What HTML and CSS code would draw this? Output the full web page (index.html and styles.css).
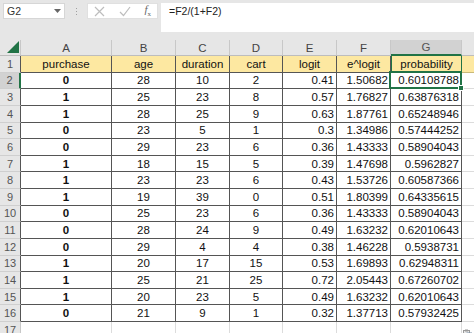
FILE: index.html
```html
<!DOCTYPE html>
<html lang="en">
<head>
    <meta charset="UTF-8">
    <title>Logistic regression - Excel</title>
    <link rel="stylesheet" href="styles.css">
</head>
<body>
    <div class="app">
        <!-- formula bar -->
        <div class="formula-bar">
            <div class="name-box">
                <span>G2</span>
                <svg class="drop" width="7" height="4" viewBox="0 0 7 4"><path d="M0 0h7L3.5 4z" fill="#666"/></svg>
            </div>
            <div class="grip"><i></i><i></i><i></i></div>
            <div class="fx-buttons">
                <svg width="11" height="11" viewBox="0 0 11 11"><path d="M1 1l9 9M10 1l-9 9" stroke="#bdbdbd" stroke-width="1.2"/></svg>
                <svg width="12" height="11" viewBox="0 0 12 11"><path d="M1 6l3.5 3.5L11 1" stroke="#bdbdbd" stroke-width="1.2" fill="none"/></svg>
                <span class="fx"><i>f</i><sub>x</sub></span>
            </div>
            <div class="formula">=F2/(1+F2)</div>
        </div>

        <!-- sheet -->
        <div class="sheet">
            <div class="corner"><span class="select-all"></span></div>
            <div class="col-head">A</div>
            <div class="col-head">B</div>
            <div class="col-head">C</div>
            <div class="col-head">D</div>
            <div class="col-head">E</div>
            <div class="col-head">F</div>
            <div class="col-head active">G</div>
            <div class="col-head last"></div>

            <div class="row-head">1</div>
            <div class="cell head">purchase</div>
            <div class="cell head">age</div>
            <div class="cell head">duration</div>
            <div class="cell head">cart</div>
            <div class="cell head">logit</div>
            <div class="cell head">e^logit</div>
            <div class="cell head g1">probability</div>
            <div class="cell head spare"></div>

            <div class="row-head active">2</div>
            <div class="cell b">0</div><div class="cell">28</div><div class="cell">10</div><div class="cell">2</div>
            <div class="cell num">0.41</div><div class="cell num">1.50682</div><div class="cell num selected">0.60108788</div><div class="cell spare"></div>

            <div class="row-head">3</div>
            <div class="cell b">1</div><div class="cell">25</div><div class="cell">23</div><div class="cell">8</div>
            <div class="cell num">0.57</div><div class="cell num">1.76827</div><div class="cell num">0.63876318</div><div class="cell spare"></div>

            <div class="row-head">4</div>
            <div class="cell b">1</div><div class="cell">28</div><div class="cell">25</div><div class="cell">9</div>
            <div class="cell num">0.63</div><div class="cell num">1.87761</div><div class="cell num">0.65248946</div><div class="cell spare"></div>

            <div class="row-head">5</div>
            <div class="cell b">0</div><div class="cell">23</div><div class="cell">5</div><div class="cell">1</div>
            <div class="cell num">0.3</div><div class="cell num">1.34986</div><div class="cell num">0.57444252</div><div class="cell spare"></div>

            <div class="row-head">6</div>
            <div class="cell b">0</div><div class="cell">29</div><div class="cell">23</div><div class="cell">6</div>
            <div class="cell num">0.36</div><div class="cell num">1.43333</div><div class="cell num">0.58904043</div><div class="cell spare"></div>

            <div class="row-head">7</div>
            <div class="cell b">1</div><div class="cell">18</div><div class="cell">15</div><div class="cell">5</div>
            <div class="cell num">0.39</div><div class="cell num">1.47698</div><div class="cell num">0.5962827</div><div class="cell spare"></div>

            <div class="row-head">8</div>
            <div class="cell b">1</div><div class="cell">23</div><div class="cell">23</div><div class="cell">6</div>
            <div class="cell num">0.43</div><div class="cell num">1.53726</div><div class="cell num">0.60587366</div><div class="cell spare"></div>

            <div class="row-head">9</div>
            <div class="cell b">1</div><div class="cell">19</div><div class="cell">39</div><div class="cell">0</div>
            <div class="cell num">0.51</div><div class="cell num">1.80399</div><div class="cell num">0.64335615</div><div class="cell spare"></div>

            <div class="row-head">10</div>
            <div class="cell b">0</div><div class="cell">25</div><div class="cell">23</div><div class="cell">6</div>
            <div class="cell num">0.36</div><div class="cell num">1.43333</div><div class="cell num">0.58904043</div><div class="cell spare"></div>

            <div class="row-head">11</div>
            <div class="cell b">0</div><div class="cell">28</div><div class="cell">24</div><div class="cell">9</div>
            <div class="cell num">0.49</div><div class="cell num">1.63232</div><div class="cell num">0.62010643</div><div class="cell spare"></div>

            <div class="row-head">12</div>
            <div class="cell b">0</div><div class="cell">29</div><div class="cell">4</div><div class="cell">4</div>
            <div class="cell num">0.38</div><div class="cell num">1.46228</div><div class="cell num">0.5938731</div><div class="cell spare"></div>

            <div class="row-head">13</div>
            <div class="cell b">1</div><div class="cell">20</div><div class="cell">17</div><div class="cell">15</div>
            <div class="cell num">0.53</div><div class="cell num">1.69893</div><div class="cell num">0.62948311</div><div class="cell spare"></div>

            <div class="row-head">14</div>
            <div class="cell b">1</div><div class="cell">25</div><div class="cell">21</div><div class="cell">25</div>
            <div class="cell num">0.72</div><div class="cell num">2.05443</div><div class="cell num">0.67260702</div><div class="cell spare"></div>

            <div class="row-head">15</div>
            <div class="cell b">1</div><div class="cell">20</div><div class="cell">23</div><div class="cell">5</div>
            <div class="cell num">0.49</div><div class="cell num">1.63232</div><div class="cell num">0.62010643</div><div class="cell spare"></div>

            <div class="row-head">16</div>
            <div class="cell b">0</div><div class="cell">21</div><div class="cell">9</div><div class="cell">1</div>
            <div class="cell num">0.32</div><div class="cell num">1.37713</div><div class="cell num">0.57932425</div><div class="cell spare"></div>

            <div class="row-head blank">17</div>
            <div class="cell blank"></div><div class="cell blank"></div><div class="cell blank"></div><div class="cell blank"></div>
            <div class="cell blank"></div><div class="cell blank"></div><div class="cell blank"></div>
            <div class="cell blank spare">
                <svg class="paste" width="9" height="9" viewBox="0 0 9 9"><rect x="0.5" y="1.5" width="6" height="7" fill="#e8e8e8" stroke="#9a9a9a"/><rect x="2" y="0.5" width="3" height="2" fill="#9a9a9a"/><rect x="4" y="4" width="4.5" height="4.5" fill="#fff" stroke="#7a8fa8"/></svg>
            </div>
        </div>
    </div>
</body>
</html>
```

FILE: styles.css
```css
body {
    margin: 0;
    background: #e6e6e6;
    font-family: 'Liberation Sans', Arial, sans-serif;
    overflow: hidden;
}

.app {
    width: 474px;
    height: 333px;
    overflow: hidden;
}

/* ---------- formula bar ---------- */

.formula-bar {
    height: 40px;
    box-sizing: border-box;
    padding: 3px 0 0 3px;
    display: flex;
    align-items: flex-start;
    background: #e6e6e6;
}

.name-box {
    width: 62px;
    height: 16px;
    box-sizing: border-box;
    background: #fff;
    border: 1px solid #d6d6d6;
    display: flex;
    align-items: center;
    justify-content: space-between;
    padding: 0 3px 0 3px;
    font-size: 10.5px;
    color: #333;
}

.grip {
    width: 22px;
    height: 16px;
    display: flex;
    flex-direction: column;
    align-items: center;
    justify-content: center;
    gap: 2px;
}

.grip i {
    width: 1px;
    height: 1px;
    background: #a0a0a0;
}

.fx-buttons {
    width: 71px;
    height: 16px;
    box-sizing: border-box;
    background: #fff;
    border: 1px solid #e0e0e0;
    display: flex;
    align-items: center;
    justify-content: space-between;
    padding: 0 6px 0 6px;
}

.fx {
    font-family: 'Liberation Serif', serif;
    font-size: 11px;
    color: #666;
}

.fx sub {
    font-size: 7px;
    font-style: normal;
}

.formula {
    flex: 1;
    height: 29px;
    margin-left: 3px;
    background: #fff;
    box-sizing: border-box;
    padding: 2px 0 0 8px;
    font-size: 10.5px;
    color: #222;
}

/* ---------- sheet grid ---------- */

.sheet {
    display: grid;
    grid-template-columns: 21px 91px 64px 54px 53px 54px 54px 71px 40px;
    grid-template-rows: 16px repeat(16, 16.625px) 20px;
    background: #fff;
    font-size: 11.5px;
    color: #111;
}

.corner,
.col-head,
.row-head,
.cell {
    box-sizing: border-box;
    display: flex;
    align-items: center;
    justify-content: center;
    white-space: nowrap;
    overflow: hidden;
}

.corner {
    background: #e6e6e6;
    border-right: 1px solid #c8c8c8;
    border-bottom: 1px solid #bdbdbd;
    justify-content: flex-end;
    align-items: flex-end;
    padding: 0 1px 2px 0;
}

.select-all {
    width: 0;
    height: 0;
    border-left: 12px solid transparent;
    border-bottom: 12px solid #217346;
}

.col-head {
    background: #e6e6e6;
    color: #444;
    border-right: 1px solid #c8c8c8;
    border-bottom: 1px solid #bdbdbd;
}

.col-head.active {
    background: #d2d2d2;
    color: #555;
    border-bottom: 2px solid #217346;
}

.col-head.last {
    border-right: none;
}

.row-head {
    background: #e6e6e6;
    color: #555;
    font-size: 11px;
    border-right: 1px solid #555;
    border-bottom: 1px solid #cfcfcf;
}

.row-head.active {
    background: #d2d2d2;
    border-right: 2px solid #217346;
}

.row-head.blank {
    border-right: 1px solid #c8c8c8;
    border-bottom: none;
    align-items: flex-start;
    padding-top: 2px;
}

.cell {
    border-right: 1px solid #555;
    border-bottom: 1px solid #555;
}

.cell.head {
    background: #fde8a1;
}

.cell.b {
    font-weight: bold;
}

.cell.num {
    justify-content: flex-end;
    padding-right: 2px;
}

.cell.g1 {
    border-left: 1px solid #217346;
    border-right: 1px solid #217346;
}

.cell.spare {
    border-right: 1px solid #dcdcdc;
    border-bottom: 1px solid #dcdcdc;
}

.cell.head.spare {
    border-bottom: 1px solid #c9b97a;
}

.cell.blank {
    border-right: 1px solid #dcdcdc;
    border-bottom: none;
}

.cell.selected {
    position: relative;
    overflow: visible;
}

/* selection outline and fill handle */
.cell.selected::after {
    content: '';
    position: absolute;
    left: -2px;
    top: -2px;
    right: -1px;
    bottom: -1px;
    border: 2px solid #217346;
}

.cell.selected::before {
    content: '';
    position: absolute;
    right: -3px;
    bottom: -3px;
    width: 4px;
    height: 4px;
    background: #217346;
    border: 1px solid #fff;
    z-index: 1;
}

.paste {
    position: absolute;
    margin: 4px 0 0 0;
}

.cell.blank.spare {
    justify-content: flex-start;
    align-items: flex-start;
    padding: 3px 0 0 1px;
}
```
